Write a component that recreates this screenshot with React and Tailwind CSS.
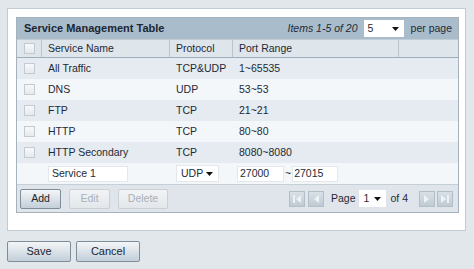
import React from 'react';

const rows = [
  { name: 'All Traffic', protocol: 'TCP&UDP', range: '1~65535' },
  { name: 'DNS', protocol: 'UDP', range: '53~53' },
  { name: 'FTP', protocol: 'TCP', range: '21~21' },
  { name: 'HTTP', protocol: 'TCP', range: '80~80' },
  { name: 'HTTP Secondary', protocol: 'TCP', range: '8080~8080' },
];

function Checkbox() {
  return (
    <span className="block w-[11px] h-[11px] border border-[#c3cbd2] bg-gradient-to-b from-[#f7f8f9] to-[#e6eaed]" />
  );
}

function Caret() {
  return (
    <svg width="7" height="4" viewBox="0 0 7 4" className="shrink-0">
      <path d="M0 0h7L3.5 4z" fill="#111" />
    </svg>
  );
}

function Select({ value, className = '' }) {
  return (
    <div className={`flex items-center justify-between bg-white h-[17px] pl-[4px] pr-[5px] ${className}`}>
      <span>{value}</span>
      <Caret />
    </div>
  );
}

function PageIcon({ dir, end }) {
  // small navigation buttons, disabled look
  const left = dir === 'left';
  return (
    <span className="flex items-center justify-center w-[16px] h-[16px] border border-[#b4bec6] bg-gradient-to-b from-[#d9e1e7] to-[#bfcad3]">
      <svg width="10" height="8" viewBox="0 0 10 8">
        {left ? (
          <>
            {end && <rect x="1" y="0" width="2" height="8" fill="#eef2f5" />}
            <path d={end ? 'M9 0v8L4 4z' : 'M8 0v8L3 4z'} fill="#eef2f5" />
          </>
        ) : (
          <>
            <path d={end ? 'M1 0v8l5-4z' : 'M2 0v8l5-4z'} fill="#eef2f5" />
            {end && <rect x="7" y="0" width="2" height="8" fill="#eef2f5" />}
          </>
        )}
      </svg>
    </span>
  );
}

function Btn({ children, disabled, className = '' }) {
  return (
    <button
      className={`h-[20px] rounded-[2px] border bg-gradient-to-b ${
        disabled
          ? 'border-[#c9d0d6] from-[#f2f4f6] to-[#e2e7eb] text-[#a9b0b6]'
          : 'border-[#7f8d99] from-[#f4f6f8] to-[#c3cfd9] text-[#1b2530]'
      } ${className}`}
    >
      {children}
    </button>
  );
}

export default function App() {
  return (
    <div
      className="w-[474px] h-[269px] bg-[#e2e7eb] pt-[8px] pl-[7px] pr-[8px] text-[10.5px] text-[#1e2a36]"
      style={{ fontFamily: '"Liberation Sans", Arial, sans-serif' }}
    >
      {/* white panel */}
      <div className="h-[223px] bg-white border border-[#c3cbd2] pt-[8px] pl-[8px] pr-[5px]">
        <div className="w-[443px] border border-[#a6b3bd]">
          {/* title bar */}
          <div className="flex items-center h-[21px] bg-[#a9bccb] pl-[7px] pr-[6px]">
            <span className="font-bold text-[11px] text-[#1a2633]">Service Management Table</span>
            <span className="ml-auto italic text-[#1f2b37]">Items 1-5 of 20</span>
            <Select value="5" className="w-[40px] ml-[6px]" />
            <span className="ml-[7px] text-[#1f2b37]">per page</span>
          </div>

          {/* column header */}
          <div className="flex h-[19px] bg-[#dee5eb] border-t border-[#c2ccd4] border-b border-b-[#9eacb7]">
            <div className="w-[25px] flex items-center justify-center border-r border-[#b9c4cd]">
              <Checkbox />
            </div>
            <div className="w-[128px] flex items-center pl-[6px] border-r border-[#b9c4cd]">Service Name</div>
            <div className="w-[63px] flex items-center pl-[6px] border-r border-[#b9c4cd]">Protocol</div>
            <div className="w-[166px] flex items-center pl-[6px] border-r border-[#b9c4cd]">Port Range</div>
            <div className="flex-1" />
          </div>

          {rows.map((r, i) => (
            <div
              key={r.name}
              className={`flex h-[21px] items-center ${i % 2 === 0 ? 'bg-[#e5ebf0]' : 'bg-[#f4f7f9]'}`}
            >
              <div className="w-[25px] flex justify-center">
                <Checkbox />
              </div>
              <div className="w-[128px] pl-[6px]">{r.name}</div>
              <div className="w-[63px] pl-[6px]">{r.protocol}</div>
              <div className="pl-[6px]">{r.range}</div>
            </div>
          ))}

          {/* new entry row */}
          <div className="flex h-[21px] items-center bg-[#f4f7f9]">
            <div className="w-[25px]" />
            <div className="w-[128px] pl-[6px]">
              <div className="w-[80px] h-[16px] bg-white border border-[#e3e8ec] flex items-center pl-[3px]">Service 1</div>
            </div>
            <div className="w-[63px] pl-[6px]">
              <Select value="UDP" className="w-[43px] border border-[#e3e8ec]" />
            </div>
            <div className="pl-[4px] flex items-center">
              <div className="w-[47px] h-[16px] bg-white border border-[#e3e8ec] flex items-center pl-[2px]">27000</div>
              <span className="mx-[1px]">~</span>
              <div className="w-[46px] h-[16px] bg-white border border-[#e3e8ec] flex items-center pl-[1px]">27015</div>
            </div>
          </div>

          {/* actions + pagination */}
          <div className="flex h-[28px] items-center bg-[#dfe5ea] border-t border-[#c6cfd6] pl-[3px] pr-[5px]">
            <Btn className="w-[41px]">Add</Btn>
            <Btn disabled className="w-[41px] ml-[8px]">Edit</Btn>
            <Btn disabled className="w-[50px] ml-[8px]">Delete</Btn>
            <div className="ml-auto flex items-center">
              <PageIcon dir="left" end />
              <span className="ml-[3px]"><PageIcon dir="left" /></span>
              <span className="ml-[7px]">Page</span>
              <Select value="1" className="w-[27px] ml-[4px]" />
              <span className="ml-[4px]">of 4</span>
              <span className="ml-[11px]"><PageIcon dir="right" /></span>
              <span className="ml-[2px]"><PageIcon dir="right" end /></span>
            </div>
          </div>
        </div>
      </div>

      {/* bottom buttons */}
      <div className="flex gap-[5px] mt-[10px]">
        <Btn className="w-[64px] h-[21px] text-[11px]">Save</Btn>
        <Btn className="w-[64px] h-[21px] text-[11px]">Cancel</Btn>
      </div>
    </div>
  );
}
